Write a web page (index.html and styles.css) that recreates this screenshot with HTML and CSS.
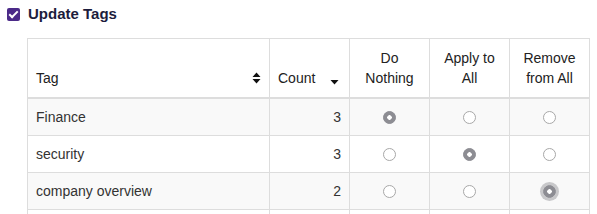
FILE: index.html
```html
<!DOCTYPE html>
<html lang="en">
<head>
    <meta charset="UTF-8">
    <title>Update Tags</title>
    <link rel="stylesheet" href="styles.css">
</head>
<body>
    <div class="panel">
        <label class="toggle">
            <input type="checkbox" class="toggle-box" checked>
            <span class="toggle-label">Update Tags</span>
        </label>

        <table class="tag-table">
            <colgroup>
                <col class="col-tag">
                <col class="col-num">
                <col class="col-num">
                <col class="col-num">
                <col class="col-num">
            </colgroup>
            <thead>
                <tr>
                    <th class="sortable">
                        Tag
                        <svg class="sort-icon" width="9" height="12" viewBox="0 0 9 12"><path d="M4.5 0.5 L8.5 5 H0.5 Z M4.5 11.5 L8.5 7 H0.5 Z" fill="#111"/></svg>
                    </th>
                    <th class="sortable">
                        Count
                        <svg class="sort-icon sort-desc" width="9" height="12" viewBox="0 0 9 12"><path d="M0.5 7 H8.5 L4.5 11.5 Z" fill="#111"/></svg>
                    </th>
                    <th class="center">Do<br>Nothing</th>
                    <th class="center">Apply to<br>All</th>
                    <th class="center">Remove<br>from All</th>
                </tr>
            </thead>
            <tbody>
                <tr>
                    <td>Finance</td>
                    <td class="num">3</td>
                    <td class="center"><input type="radio" name="t1" checked></td>
                    <td class="center"><input type="radio" name="t1"></td>
                    <td class="center"><input type="radio" name="t1"></td>
                </tr>
                <tr>
                    <td>security</td>
                    <td class="num">3</td>
                    <td class="center"><input type="radio" name="t2"></td>
                    <td class="center"><input type="radio" name="t2" checked></td>
                    <td class="center"><input type="radio" name="t2"></td>
                </tr>
                <tr>
                    <td>company overview</td>
                    <td class="num">2</td>
                    <td class="center"><input type="radio" name="t3"></td>
                    <td class="center"><input type="radio" name="t3"></td>
                    <td class="center"><input type="radio" name="t3" class="focused" checked></td>
                </tr>
                <tr>
                    <td>&nbsp;</td>
                    <td></td>
                    <td></td>
                    <td></td>
                    <td></td>
                </tr>
            </tbody>
        </table>
    </div>
</body>
</html>
```

FILE: styles.css
```css
body {
    font-family: "Liberation Sans", Arial, sans-serif;
    font-size: 14px;
    line-height: 20px;
    color: #333;
    margin: 0;
    padding: 0;
    background: #fff;
}
.panel {
    padding: 7px 0 0 7px;
}
.toggle {
    display: flex;
    align-items: center;
    gap: 8px;
    height: 14px;
}
.toggle-box {
    appearance: none;
    -webkit-appearance: none;
    width: 13px;
    height: 13px;
    margin: 0;
    border-radius: 2px;
    background: #4b2a88;
    position: relative;
}
.toggle-box::after {
    content: "";
    position: absolute;
    left: 4px;
    top: 1.5px;
    width: 3px;
    height: 7px;
    border: solid #fff;
    border-width: 0 2px 2px 0;
    transform: rotate(45deg);
}
.toggle-label {
    font-weight: bold;
    font-size: 15px;
    color: #1c1c3c;
}
.tag-table {
    margin: 17px 0 0 20px;
    width: 562px;
    border-collapse: collapse;
    table-layout: fixed;
    border: 1px solid #ddd;
}
.col-tag {
    width: 242px;
}
.col-num {
    width: 80px;
}
.tag-table th,
.tag-table td {
    padding: 8px;
    border: 1px solid #ddd;
}
.tag-table th {
    padding: 9px 8px;
    font-weight: normal;
    color: #222;
    text-align: left;
    vertical-align: bottom;
    border-bottom: 2px solid #ddd;
}
.tag-table td {
    vertical-align: middle;
}
.tag-table tbody tr:nth-child(odd) {
    background: #f9f9f9;
}
.sortable {
    position: relative;
}
.sort-icon {
    float: right;
    margin-top: 4px;
}
.sort-desc {
    margin-top: 5px;
    margin-right: 2px;
}
.center {
    text-align: center;
}
.tag-table th.center {
    text-align: center;
}
.num {
    text-align: right;
}
input[type="radio"] {
    appearance: none;
    -webkit-appearance: none;
    width: 13px;
    height: 13px;
    margin: 0;
    border: 1px solid #a8a8a8;
    border-radius: 50%;
    background: #fff;
    vertical-align: middle;
    position: relative;
    top: -1px;
}
input[type="radio"]:checked {
    border-color: #8d8d93;
    background: radial-gradient(circle, #fff 0 2px, #8d8d93 2.5px);
}
input[type="radio"].focused {
    box-shadow: 0 0 0 3px rgba(140, 140, 145, 0.45);
}
```
